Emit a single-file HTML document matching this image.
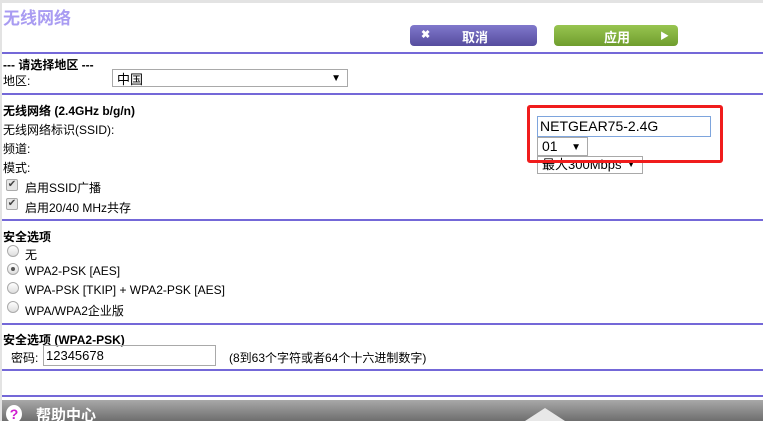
<!DOCTYPE html>
<html><head><meta charset="utf-8"><style>
*{margin:0;padding:0;box-sizing:border-box}
body{width:763px;height:421px;overflow:hidden;background:#fff;position:relative;font-family:"Liberation Sans","Noto Sans CJK SC",sans-serif;font-size:12px;color:#000}
.a{position:absolute;white-space:nowrap}
.ln{position:absolute;left:2px;width:761px;height:2px;background:#7468d8}
.b{font-weight:bold}
.sel{position:absolute;border:1px solid #a9a9a9;background:#fff;font-size:13px;padding-left:4px;line-height:17px}
.sel i{position:absolute;right:6px;top:0;font-style:normal;font-size:10px}
.cb{position:absolute;width:12px;height:12px;border:1px solid #aaa;border-radius:2px;background:#e6e6e6;font-size:10px;line-height:10px;text-align:center;color:#444}
.rd{position:absolute;width:12px;height:12px;border:1px solid #aaa;border-radius:50%;background:linear-gradient(#fff,#ddd)}
</style></head><body>
<div class="a" style="left:0;top:0;width:763px;height:3px;background:#e3e3e3"></div>
<div class="a" style="left:0;top:0;width:2px;height:421px;background:#e3e3e3"></div>
<div class="a b" style="left:3px;top:4px;font-size:17px;color:#a99cf2">无线网络</div>
<div class="a" style="left:410px;top:25px;width:127px;height:21px;border-radius:4px;background:linear-gradient(#8078cc,#564d9e);color:#fff;font-weight:bold;font-size:13px">
<span class="a" style="left:11px;top:3px;font-size:11px">✖</span><span class="a" style="left:52px;top:2px">取消</span></div>
<div class="a" style="left:554px;top:25px;width:124px;height:21px;border-radius:4px;background:linear-gradient(#98c550,#6f9d2e);color:#fff;font-weight:bold;font-size:13px">
<span class="a" style="left:50px;top:2px">应用</span><span class="a" style="left:106px;top:4px;font-size:9px">▶</span></div>
<div class="ln" style="top:52px"></div>
<div class="a b" style="left:3px;top:56px">--- 请选择地区 ---</div>
<div class="a" style="left:3px;top:72px">地区:</div>
<div class="sel" style="left:112px;top:69px;width:236px;height:18px;padding-top:1px">中国<i>▼</i></div>
<div class="ln" style="top:93px"></div>
<div class="a b" style="left:3px;top:102px">无线网络 (2.4GHz b/g/n)</div>
<div class="a" style="left:3px;top:121px">无线网络标识(SSID):</div>
<div class="a" style="left:3px;top:140px">频道:</div>
<div class="a" style="left:3px;top:159px">模式:</div>
<div class="cb" style="left:6px;top:179px">✔</div><div class="a" style="left:25px;top:179px">启用SSID广播</div>
<div class="cb" style="left:6px;top:198px">✔</div><div class="a" style="left:25px;top:199px">启用20/40 MHz共存</div>
<div class="sel" style="left:537px;top:156px;width:106px;height:18px;line-height:16px">最大300Mbps<i>▼</i></div>
<div class="a" style="left:527px;top:105px;width:196px;height:58px;border:3px solid #f01c1c;border-radius:3px"></div>
<div class="a" style="left:537px;top:116px;width:174px;height:21px;border:1px solid #7ea5dd;font-size:14px;padding:1px 2px;background:#fff">NETGEAR75-2.4G</div>
<div class="sel" style="left:537px;top:137px;width:51px;height:19px;font-size:14px">01<i style="top:1px">▼</i></div>
<div class="ln" style="top:219px"></div>
<div class="a b" style="left:3px;top:228px">安全选项</div>
<div class="rd" style="left:7px;top:245px"></div><div class="a" style="left:25px;top:246px">无</div>
<div class="rd" style="left:7px;top:263px"><div style="width:4px;height:4px;border-radius:50%;background:#555;margin:3px"></div></div><div class="a" style="left:25px;top:264px">WPA2-PSK [AES]</div>
<div class="rd" style="left:7px;top:282px"></div><div class="a" style="left:25px;top:283px">WPA-PSK [TKIP] + WPA2-PSK [AES]</div>
<div class="rd" style="left:7px;top:301px"></div><div class="a" style="left:25px;top:302px">WPA/WPA2企业版</div>
<div class="ln" style="top:323px"></div>
<div class="a b" style="left:3px;top:331px">安全选项 (WPA2-PSK)</div>
<div class="a" style="left:11px;top:349px">密码:</div>
<div class="a" style="left:43px;top:345px;width:173px;height:21px;border:1px solid #a9a9a9;font-size:13px;padding:2px 2px">12345678</div>
<div class="a" style="left:229px;top:349px">(8到63个字符或者64个十六进制数字)</div>
<div class="ln" style="top:369px"></div>
<div class="ln" style="top:395px"></div>
<div class="a" style="left:2px;top:400px;width:761px;height:21px;background:linear-gradient(#a8a8a8,#6e6e6e)"></div>
<div class="a" style="left:6px;top:405px;width:16px;height:18px;border-radius:50%;background:#fff;color:#d01bd0;font-weight:bold;font-size:14px;text-align:center;line-height:18px">?</div>
<div class="a b" style="left:36px;top:404px;color:#fff;font-size:15px">帮助中心</div>
<div class="a" style="left:525px;top:408px;width:0;height:0;border-left:20px solid transparent;border-right:20px solid transparent;border-bottom:13px solid #e8e8e8"></div>
</body></html>
